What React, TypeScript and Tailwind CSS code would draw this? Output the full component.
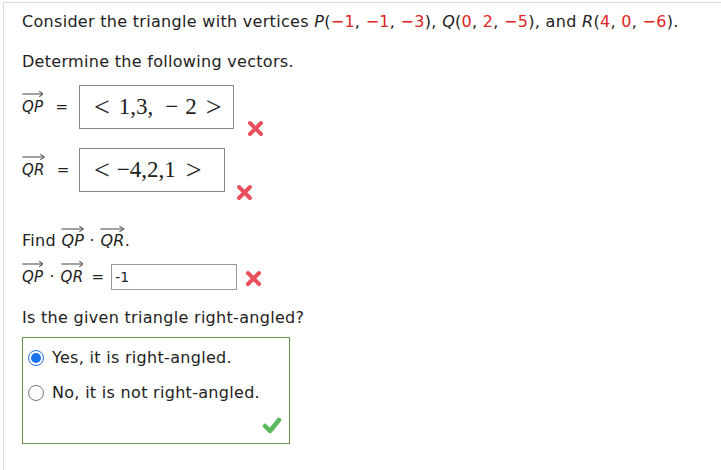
import type { ReactNode } from "react";

const sans = "font-['DejaVu_Sans','Verdana',sans-serif]";
const serif = "font-['Liberation_Serif','Times_New_Roman',serif]";

function Vec({ children }: { children: ReactNode }) {
  return (
    <span className="relative inline-block italic">
      <svg className="absolute left-0 -top-[6px] w-full h-[8px]" viewBox="0 0 30 8" preserveAspectRatio="none">
        <line x1="0.5" y1="4" x2="28" y2="4" stroke="#555" strokeWidth="1.1" />
        <path d="M24 1.2 L29.5 4 L24 6.8" fill="none" stroke="#555" strokeWidth="1.1" />
      </svg>
      {children}
    </span>
  );
}

function Cross() {
  return (
    <svg width="17" height="17" viewBox="0 0 17 17">
      <path d="M3 3 L14 14 M14 3 L3 14" stroke="#e8505b" strokeWidth="4" strokeLinecap="round" />
    </svg>
  );
}

function Check() {
  return (
    <svg width="20" height="17" viewBox="0 0 20 17">
      <path d="M3 9 L8 14 L17 3" fill="none" stroke="#5cb85c" strokeWidth="4.5" strokeLinecap="round" strokeLinejoin="round" />
    </svg>
  );
}

function Red({ children }: { children: ReactNode }) {
  return <span className="text-[#e02424]">{children}</span>;
}

function Radio({ checked }: { checked?: boolean }) {
  return checked ? (
    <span className="inline-flex h-[16px] w-[16px] items-center justify-center rounded-full border-[1.5px] border-[#1a73e8] bg-white">
      <span className="h-[10px] w-[10px] rounded-full bg-[#1a73e8]" />
    </span>
  ) : (
    <span className="inline-block h-[16px] w-[16px] rounded-full border border-[#767676] bg-white" />
  );
}

export default function App() {
  return (
    <div className={`h-[470px] w-[721px] bg-white text-[#222] ${sans}`}>
      <div className="ml-[3px] mt-[2px] h-[468px] border-l border-t border-[#ddd] pl-[18px] pt-[9px] text-[16px] tracking-[0.3px]">
        <p className="leading-[20px]">
          Consider the triangle with vertices <i>P</i>(<Red>−1</Red>, <Red>−1</Red>, <Red>−3</Red>), <i>Q</i>(
          <Red>0</Red>, <Red>2</Red>, <Red>−5</Red>), and <i>R</i>(<Red>4</Red>, <Red>0</Red>, <Red>−6</Red>).
        </p>
        <p className="mt-[20px] leading-[20px]">Determine the following vectors.</p>

        <div className="mt-[13px] flex items-start">
          <div className="flex h-[44px] w-[57px] items-center text-[15px]">
            <Vec>QP</Vec>
            <span className="ml-[12px]">=</span>
          </div>
          <div className={`flex h-[44px] w-[155px] items-center border border-[#888] pl-[14px] text-[23px] tracking-normal ${serif}`}>
            <span className="text-[28px] leading-none">&lt;</span>
            <span className="ml-[9px]">1,3,</span>
            <span className="ml-[12px]">−</span>
            <span className="ml-[7px]">2</span>
            <span className="ml-[9px] text-[28px] leading-none">&gt;</span>
          </div>
          <div className="ml-[13px] mt-[35px]">
            <Cross />
          </div>
        </div>

        <div className="mt-[11px] flex items-start">
          <div className="flex h-[44px] w-[57px] items-center text-[15px]">
            <Vec>QR</Vec>
            <span className="ml-[12px]">=</span>
          </div>
          <div className={`flex h-[44px] w-[146px] items-center border border-[#888] pl-[14px] text-[23px] tracking-normal ${serif}`}>
            <span className="text-[28px] leading-none">&lt;</span>
            <span className="ml-[7px]">−4,2,1</span>
            <span className="ml-[10px] text-[28px] leading-none">&gt;</span>
          </div>
          <div className="ml-[11px] mt-[36px]">
            <Cross />
          </div>
        </div>

        <p className="mt-[30px] leading-[20px]">
          Find <Vec>QP</Vec> · <Vec>QR</Vec>.
        </p>

        <div className="mt-[13px] flex items-center text-[15px]">
          <Vec>QP</Vec>
          <span className="mx-[6px]">·</span>
          <Vec>QR</Vec>
          <span className="ml-[8px] mr-[7px]">=</span>
          <div className="flex h-[26px] w-[126px] items-center border border-[#999] pl-[3px] text-[14px] tracking-normal">-1</div>
          <div className="ml-[8px] mt-[3px]">
            <Cross />
          </div>
        </div>

        <p className="mt-[18px] leading-[20px]">Is the given triangle right-angled?</p>

        <div className="mt-[9px] h-[107px] w-[268px] border border-[#6d8f4d] pl-[5px] pt-[10px]">
          <label className="flex items-center gap-[8px] leading-[20px]">
            <Radio checked />
            <span>Yes, it is right-angled.</span>
          </label>
          <label className="mt-[15px] flex items-center gap-[8px] leading-[20px]">
            <Radio />
            <span>No, it is not right-angled.</span>
          </label>
          <div className="mt-[14px] flex justify-end pr-[7px]">
            <Check />
          </div>
        </div>
      </div>
    </div>
  );
}
